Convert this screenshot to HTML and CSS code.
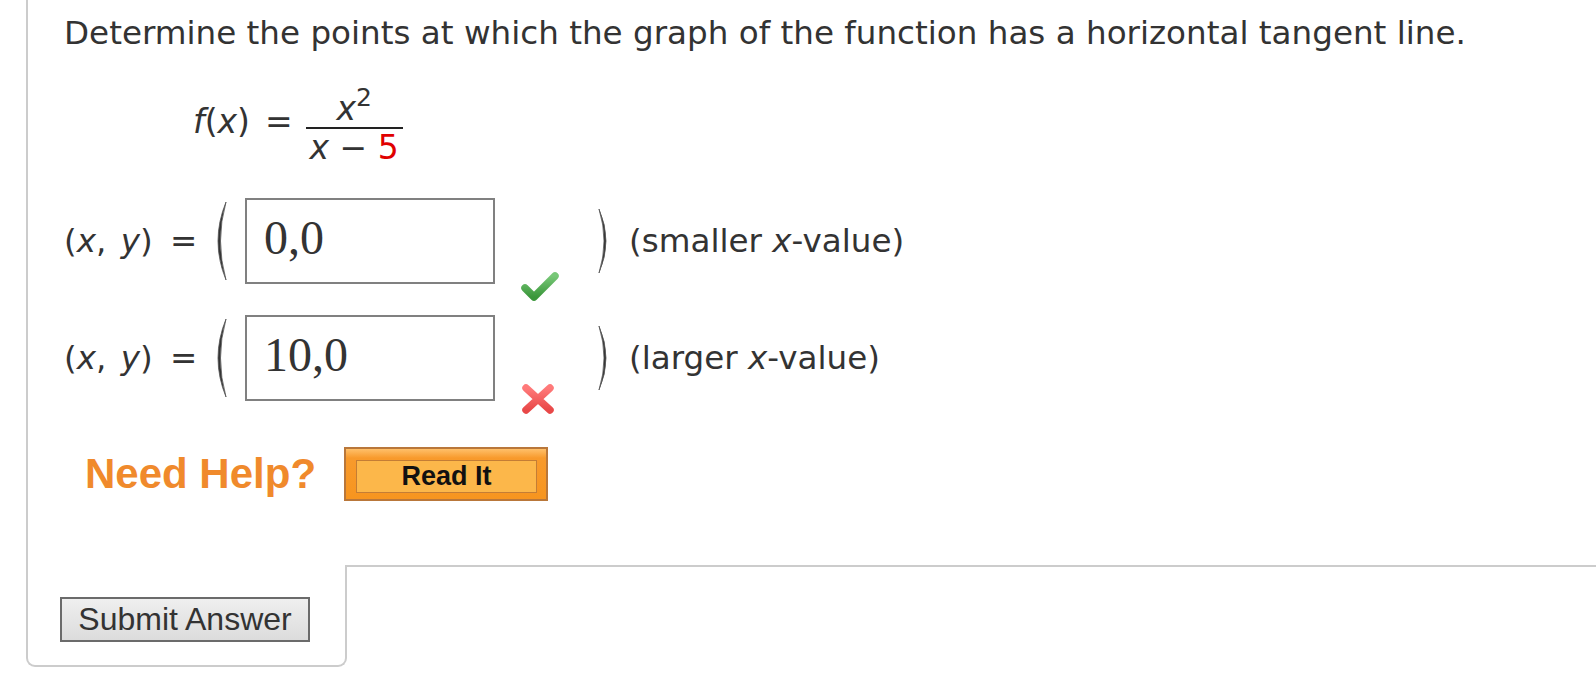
FILE: index.html
```html
<!DOCTYPE html>
<html>
<head>
<meta charset="utf-8">
<link rel="stylesheet" href="styles.css">
</head>
<body>
<div class="page">
  <div class="card">
    <p class="question">Determine the points at which the graph of the function has a horizontal tangent line.</p>
    <div class="fn">
      <span class="fx"><i>f</i>(<i>x</i>)</span>
      <span class="fn-eq">=</span>
      <span class="frac">
        <span class="num"><i>x</i><sup>2</sup></span>
        <span class="den"><i>x</i> − <span class="red">5</span></span>
      </span>
    </div>

    <div class="answers">
      <div class="row">
        <span class="lbl">(<i>x</i>, <i>y</i>)</span>
        <span class="eq">=</span>
        <svg class="paren" width="18" height="80" viewBox="0 0 18 80"><path d="M16 1 Q0 40 16 79 Q5 40 16 1 Z" fill="#333" stroke="#555" stroke-width="0.8"/></svg>
        <div class="box">0,0</div>
        <span class="mark">
          <svg width="40" height="34" viewBox="0 0 40 34">
            <defs><linearGradient id="g1" x1="0" y1="0" x2="0" y2="1"><stop offset="0" stop-color="#78c878"/><stop offset="1" stop-color="#3a963a"/></linearGradient></defs>
            <path d="M5 19 L14 28 L35 7" fill="none" stroke="url(#g1)" stroke-width="7.5" stroke-linecap="round" stroke-linejoin="round"/>
          </svg>
        </span>
        <svg class="paren rp" width="16" height="66" viewBox="0 0 16 66"><path d="M2 1 Q16 33 2 65 Q12 33 2 1 Z" fill="#333" stroke="#555" stroke-width="0.8"/></svg>
        <span class="hint">(smaller <i>x</i>-value)</span>
      </div>

      <div class="row">
        <span class="lbl">(<i>x</i>, <i>y</i>)</span>
        <span class="eq">=</span>
        <svg class="paren" width="18" height="80" viewBox="0 0 18 80"><path d="M16 1 Q0 40 16 79 Q5 40 16 1 Z" fill="#333" stroke="#555" stroke-width="0.8"/></svg>
        <div class="box">10,0</div>
        <span class="mark x">
          <svg width="36" height="32" viewBox="0 0 36 32">
            <defs><linearGradient id="g2" x1="0" y1="0" x2="0" y2="1"><stop offset="0" stop-color="#ff7a7a"/><stop offset="1" stop-color="#e84848"/></linearGradient></defs>
            <path d="M6 5 L30 27 M30 5 L6 27" fill="none" stroke="url(#g2)" stroke-width="7.5" stroke-linecap="round"/>
          </svg>
        </span>
        <svg class="paren rp" width="16" height="66" viewBox="0 0 16 66"><path d="M2 1 Q16 33 2 65 Q12 33 2 1 Z" fill="#333" stroke="#555" stroke-width="0.8"/></svg>
        <span class="hint">(larger <i>x</i>-value)</span>
      </div>
    </div>

    <div class="help">
      <span class="need">Need Help?</span>
      <span class="read"><span class="read-inner">Read It</span></span>
    </div>
  </div>

  <div class="foot">
    <div class="submit-cell">
      <button class="submit">Submit Answer</button>
    </div>
    <div class="foot-rest"></div>
  </div>
</div>
</body>
</html>
```

FILE: styles.css
```css
html, body {
  margin: 0;
  padding: 0;
  background: #fff;
}

body {
  font-family: "DejaVu Sans", Verdana, sans-serif;
  color: #333;
}

.page {
  margin-left: 26px;
}

.card {
  border-left: 2px solid #cccccc;
  padding: 14px 0 64px 36px;
}

.question {
  margin: 0;
  font-size: 32.6px;
  line-height: 38px;
}

.fn {
  display: flex;
  align-items: center;
  margin: 38px 0 0 129px;
  font-size: 33px;
}

.fx {
  line-height: 38px;
  margin-bottom: 12px;
}

.fn-eq {
  margin: 0 13px 12px 15px;
  line-height: 38px;
}

.frac {
  display: inline-flex;
  flex-direction: column;
  align-items: stretch;
  text-align: center;
}

.num {
  line-height: 37px;
  border-bottom: 2px solid #222;
  padding: 0 4px;
}

.num sup {
  font-size: 25px;
  line-height: 0;
  vertical-align: 14px;
}

.den {
  line-height: 37px;
  padding: 0 4px;
}

.red {
  color: #e00000;
}

.answers {
  display: flex;
  flex-direction: column;
  gap: 31px;
  margin-top: 32px;
}

.row {
  display: flex;
  align-items: center;
  font-size: 32.6px;
  height: 86px;
}

.lbl {
  width: 92px;
  word-spacing: 4px;
}

.eq {
  margin-left: 14px;
  width: 32px;
}

.paren {
  display: block;
  margin-left: 8px;
}

.box {
  box-sizing: border-box;
  width: 250px;
  height: 86px;
  margin-left: 17px;
  border: 2px solid #808080;
  font-family: "Liberation Serif", "Times New Roman", serif;
  font-size: 48px;
  line-height: 76px;
  padding-left: 17px;
  color: #333;
}

.mark {
  align-self: flex-end;
  margin: 0 0 -19px 25px;
  width: 40px;
  height: 34px;
}

.mark.x {
  margin-bottom: -16px;
}

.mark svg {
  display: block;
}

.rp {
  margin-left: 37px;
}

.hint {
  margin-left: 16px;
}

.help {
  display: flex;
  align-items: center;
  margin: 46px 0 0 21px;
}

.need {
  font-family: "Liberation Sans", Arial, sans-serif;
  font-weight: bold;
  font-size: 42px;
  color: #f08a2c;
}

.read {
  box-sizing: border-box;
  margin-left: 28px;
  width: 204px;
  height: 54px;
  border: 2px solid #b9773a;
  background: linear-gradient(#ffc06a 0, #f89a2c 18%, #f7951f 100%);
  padding: 11px 9px 6px 10px;
  display: flex;
}

.read-inner {
  flex: 1;
  border: 1px solid #c47d35;
  background: #fcb74a;
  font-family: "Liberation Sans", Arial, sans-serif;
  font-weight: bold;
  font-size: 27px;
  color: #111;
  display: flex;
  align-items: center;
  justify-content: center;
}

.foot {
  display: flex;
}

.submit-cell {
  border: 2px solid #cccccc;
  border-top: none;
  border-radius: 0 0 9px 9px;
  padding: 32px 35px 23px 32px;
}

.foot-rest {
  flex: 1;
  border-top: 2px solid #cccccc;
}

.submit {
  display: block;
  box-sizing: border-box;
  width: 250px;
  height: 45px;
  border: 2px solid #6b6b6b;
  border-radius: 0;
  background: linear-gradient(#efefef, #dcdcdc);
  font-family: "Liberation Sans", Arial, sans-serif;
  font-size: 32px;
  color: #333;
  padding: 0;
  line-height: 41px;
}
```
